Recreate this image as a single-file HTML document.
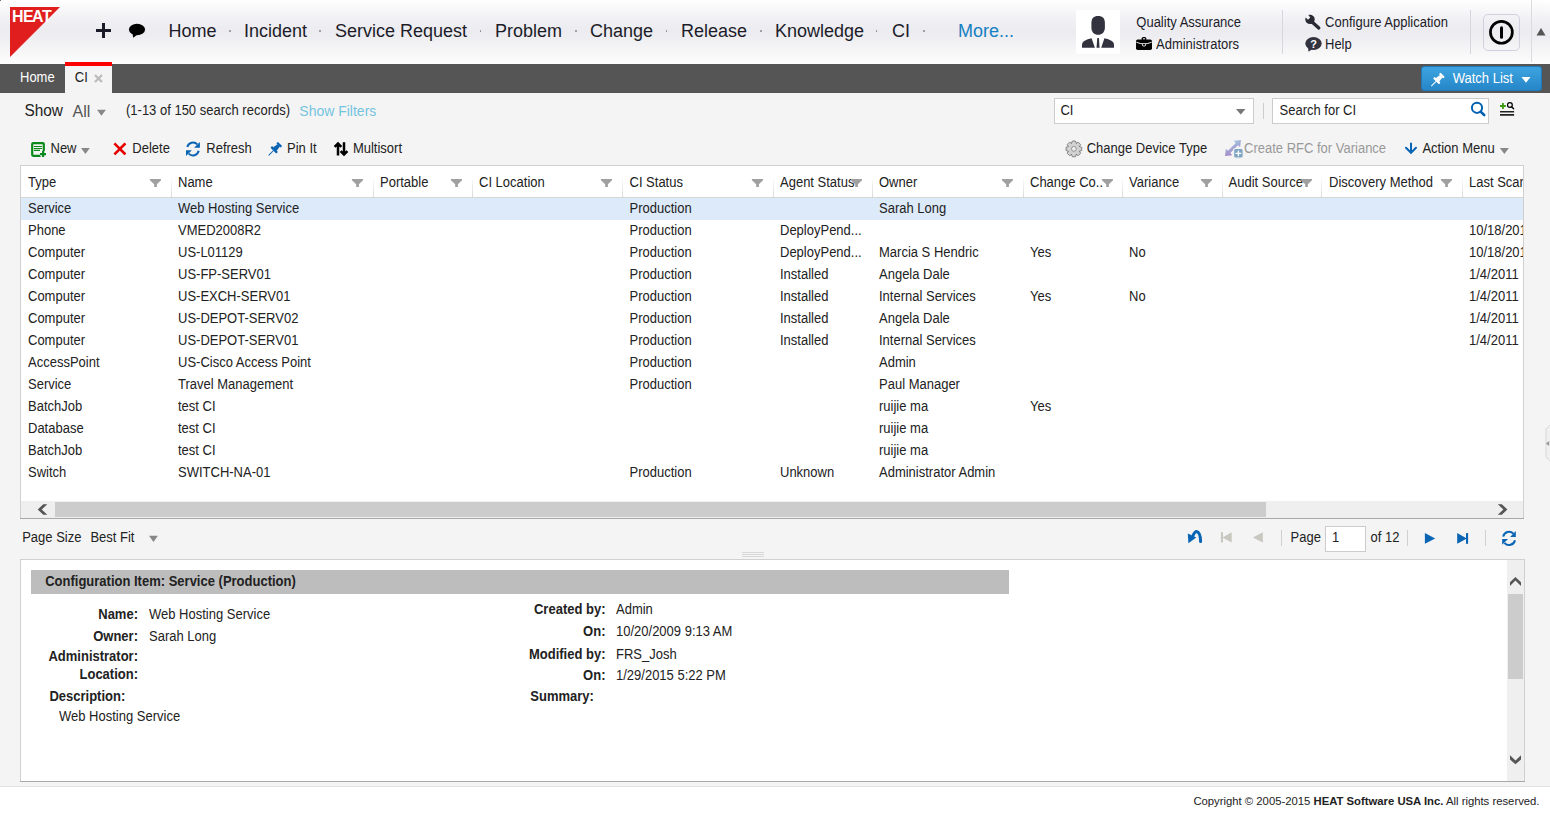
<!DOCTYPE html><html><head><meta charset="utf-8"><style>
html,body{margin:0;padding:0;width:1550px;height:816px;overflow:hidden;background:#f4f4f4;font-family:"Liberation Sans", sans-serif;}
.t{position:absolute;white-space:nowrap;}
.r{position:absolute;display:block;}

</style></head><body>
<div class="r" style="left:0px;top:0px;width:1550px;height:64px;background:linear-gradient(#ffffff 0px,#f3f3f6 16px,#ebebf0 31px,#f3f3f5 46px,#fbfbfb 60px,#fdfdfd 64px)"></div>
<svg class="r" style="left:10px;top:7px" width="50" height="50" viewBox="0 0 50 50"><polygon points="0,0 50,0 0,50" fill="#e01e1e"/></svg>
<div class="t " style="left:11.6px;top:8.88px;font-size:16.8px;line-height:16.8px;color:#fff;font-weight:bold;transform:scaleX(0.95);transform-origin:left;">H</div>
<div class="t " style="left:22.9px;top:8.88px;font-size:16.8px;line-height:16.8px;color:#fff;font-weight:bold;transform:scaleX(0.95);transform-origin:left;">E</div>
<div class="t " style="left:31.799999999999997px;top:8.88px;font-size:16.8px;line-height:16.8px;color:#fff;font-weight:bold;transform:scaleX(0.95);transform-origin:left;">A</div>
<div class="t " style="left:41.9px;top:8.88px;font-size:16.8px;line-height:16.8px;color:#fff;font-weight:bold;transform:scaleX(0.95);transform-origin:left;">T</div>
<div class="r" style="left:96px;top:29.2px;width:15px;height:2.5px;background:#1a1a28"></div>
<div class="r" style="left:102px;top:23px;width:2.9px;height:14.7px;background:#1a1a28"></div>
<svg class="r" style="left:125px;top:20px" width="25" height="22" viewBox="125 20 25 22"><ellipse cx="137" cy="29.5" rx="8.05" ry="5.75" fill="#000"/><polygon points="132.5,33.5 137.5,34.6 133.2,37.8" fill="#000"/></svg>
<div class="t " style="left:168.5px;top:21.76px;font-size:18px;line-height:18px;color:#1c1c28;font-weight:normal;">Home</div>
<div class="t " style="left:244px;top:21.76px;font-size:18px;line-height:18px;color:#1c1c28;font-weight:normal;">Incident</div>
<div class="t " style="left:335px;top:21.76px;font-size:18px;line-height:18px;color:#1c1c28;font-weight:normal;">Service Request</div>
<div class="t " style="left:495px;top:21.76px;font-size:18px;line-height:18px;color:#1c1c28;font-weight:normal;">Problem</div>
<div class="t " style="left:590px;top:21.76px;font-size:18px;line-height:18px;color:#1c1c28;font-weight:normal;">Change</div>
<div class="t " style="left:681px;top:21.76px;font-size:18px;line-height:18px;color:#1c1c28;font-weight:normal;">Release</div>
<div class="t " style="left:775px;top:21.76px;font-size:18px;line-height:18px;color:#1c1c28;font-weight:normal;">Knowledge</div>
<div class="t " style="left:892px;top:21.76px;font-size:18px;line-height:18px;color:#1c1c28;font-weight:normal;">CI</div>
<div class="r" style="left:229.05px;top:30.2px;width:1.5px;height:1.5px;background:#888;border-radius:1px"></div>
<div class="r" style="left:319.25px;top:30.2px;width:1.5px;height:1.5px;background:#888;border-radius:1px"></div>
<div class="r" style="left:479.75px;top:30.2px;width:1.5px;height:1.5px;background:#888;border-radius:1px"></div>
<div class="r" style="left:575.25px;top:30.2px;width:1.5px;height:1.5px;background:#888;border-radius:1px"></div>
<div class="r" style="left:665.75px;top:30.2px;width:1.5px;height:1.5px;background:#888;border-radius:1px"></div>
<div class="r" style="left:760.25px;top:30.2px;width:1.5px;height:1.5px;background:#888;border-radius:1px"></div>
<div class="r" style="left:875.75px;top:30.2px;width:1.5px;height:1.5px;background:#888;border-radius:1px"></div>
<div class="r" style="left:923.25px;top:30.2px;width:1.5px;height:1.5px;background:#888;border-radius:1px"></div>
<div class="t " style="left:958px;top:22.06px;font-size:18px;line-height:18px;color:#1580c2;font-weight:normal;">More...</div>
<div class="r" style="left:1076px;top:10px;width:44px;height:44px;background:#fff"></div>
<svg class="r" style="left:1076px;top:10px" width="44" height="44" viewBox="1076 10 44 44"><path d="M1098.1 15.9 C1102.6 15.9 1104.9 18.3 1104.9 23 V27.5 C1104.9 32.2 1102 34.8 1098.1 34.8 C1094.2 34.8 1091.4 32.2 1091.4 27.5 V23 C1091.4 18.3 1093.6 15.9 1098.1 15.9 Z" fill="#333340"/><path d="M1082 47.7 V44.8 C1082 41.5 1086 39.5 1091.6 38.3 L1094.9 47.7 Z" fill="#333340"/><path d="M1114 47.7 V44.8 C1114 41.5 1110 39.5 1104.4 38.3 L1101.2 47.7 Z" fill="#333340"/><polygon points="1097.3,38 1098.9,38 1099.6,47.7 1096.5,47.7" fill="#333340"/></svg>
<div class="t " style="left:1136.3px;top:16.30px;font-size:13px;line-height:13px;color:#1c1c28;font-weight:normal;transform:scaleY(1.07);transform-origin:0 11.00px;">Quality Assurance</div>
<svg class="r" style="left:1136px;top:37px" width="16" height="13" viewBox="0 0 16 13"><rect x="0" y="2.4" width="16" height="10.6" rx="1.8" fill="#000"/><rect x="6.2" y="0.7" width="3.6" height="2.6" rx="1.2" fill="none" stroke="#000" stroke-width="1.3"/><path d="M0.3 5.2 Q8 8.6 15.7 5.2" stroke="#fff" stroke-width="0.9" fill="none"/><rect x="6.4" y="6.6" width="3.2" height="2.4" rx="1" fill="#000" stroke="#fff" stroke-width="0.9"/></svg>
<div class="t " style="left:1156px;top:37.80px;font-size:13px;line-height:13px;color:#1c1c28;font-weight:normal;transform:scaleY(1.07);transform-origin:0 11.00px;">Administrators</div>
<div class="r" style="left:1282px;top:10px;width:1px;height:44px;background:#d6d6dc"></div>
<svg class="r" style="left:1302px;top:12px" width="22" height="20" viewBox="1302 12 22 20"><polygon points="1308.32,15.01 1309.57,14.72 1310.85,14.78 1312.07,15.18 1313.13,15.90 1313.96,16.87 1314.50,18.04 1314.70,19.31 1314.55,20.58 1314.06,21.77 1313.26,22.78 1312.23,23.54 1311.03,23.99 1309.75,24.09 1308.49,23.85 1307.34,23.27 1306.39,22.41 1305.71,21.32 1305.35,20.09 1305.34,18.80 1305.67,17.56 1308.02,19.68 1310.28,17.42" fill="#2a2a35"/><path d="M1311 21 L1318.8 28" stroke="#2a2a35" stroke-width="3.3" stroke-linecap="round"/></svg>
<div class="t " style="left:1325.1px;top:16.10px;font-size:13px;line-height:13px;color:#1c1c28;font-weight:normal;transform:scaleY(1.07);transform-origin:0 11.00px;">Configure Application</div>
<svg class="r" style="left:1304.5px;top:37px" width="17" height="15" viewBox="0 0 17 15"><ellipse cx="8.5" cy="6.5" rx="8.2" ry="6.4" fill="#333340"/><polygon points="3,10 7.5,12 3.5,14.8" fill="#333340"/><text x="8.5" y="10.6" font-family="Liberation Sans" font-weight="bold" font-size="11" fill="#fff" text-anchor="middle">?</text></svg>
<div class="t " style="left:1325px;top:38.00px;font-size:13px;line-height:13px;color:#1c1c28;font-weight:normal;transform:scaleY(1.07);transform-origin:0 11.00px;">Help</div>
<div class="r" style="left:1470px;top:10px;width:1px;height:44px;background:#d6d6dc"></div>
<div class="r" style="left:1483px;top:14px;width:37px;height:37px;box-sizing:border-box;border:1px solid #d0d0e0;border-radius:5px;background:transparent"></div>
<svg class="r" style="left:1483px;top:14px" width="36" height="36" viewBox="0 0 36 36"><circle cx="18.4" cy="18.3" r="10.95" fill="none" stroke="#000" stroke-width="2.7"/><rect x="17" y="12.2" width="3" height="12.6" rx="1.5" fill="#000"/></svg>
<div class="r" style="left:1531px;top:0px;width:1px;height:62px;background:#dcdce0"></div>
<svg class="r" style="left:1536px;top:28px" width="10" height="8" viewBox="0 0 10 8"><polygon points="5,0 9.5,7.5 0.5,7.5" fill="#555"/></svg>
<div class="r" style="left:0px;top:64px;width:1550px;height:29px;background:#555555"></div>
<div class="t " style="left:20px;top:71.00px;font-size:13px;line-height:13px;color:#fff;font-weight:normal;transform:scaleY(1.07);transform-origin:0 11.00px;">Home</div>
<div class="r" style="left:65px;top:62px;width:47px;height:31px;background:#f4f4f4;border-top:4px solid #ff0000;box-sizing:border-box"></div>
<div class="t " style="left:74.8px;top:71.00px;font-size:13px;line-height:13px;color:#222;font-weight:normal;transform:scaleY(1.07);transform-origin:0 11.00px;">CI</div>
<svg class="r" style="left:94px;top:74.3px" width="9" height="9" viewBox="0 0 9 9"><path d="M1 1 L8 8 M8 1 L1 8" stroke="#bbb" stroke-width="2.2"/></svg>
<div class="r" style="left:1421px;top:66px;width:121px;height:25px;background:linear-gradient(#3da4e0,#2686c8);border-radius:3px;border:1px solid #1f78b8;box-sizing:border-box"></div>
<svg class="r" style="left:1426px;top:68px" width="22" height="22" viewBox="1426 68 22 22"><g transform="translate(1436.8 80.6) rotate(45)" fill="#fff"><rect x="-3.1" y="-8.3" width="6.2" height="2.3" rx="0.9"/><polygon points="-1.7,-6.3 1.7,-6.3 2.5,-0.8 -2.5,-0.8"/><rect x="-4.2" y="-1.2" width="8.4" height="2.4" rx="0.9"/><rect x="-0.5" y="1" width="1" height="6.8"/></g></svg>
<div class="t " style="left:1452.7px;top:72.30px;font-size:13px;line-height:13px;color:#fff;font-weight:normal;transform:scaleY(1.07);transform-origin:0 11.00px;">Watch List</div>
<svg class="r" style="left:1519px;top:74px" width="14" height="11" viewBox="1519 74 14 11"><polygon points="1521.5,77 1530.5,77 1526,82.8" fill="#fff"/></svg>
<div class="t " style="left:24.4px;top:102.86px;font-size:15.4px;line-height:15.4px;color:#222;font-weight:normal;transform:scaleY(1.1);transform-origin:0 13.04px;">Show</div>
<div class="t " style="left:72.5px;top:103.66px;font-size:16px;line-height:16px;color:#555;font-weight:normal;">All</div>
<svg class="r" style="left:95px;top:107px" width="13" height="11" viewBox="95 107 13 11"><polygon points="97,109.8 105.9,109.8 101.45,115.7" fill="#888"/></svg>
<div class="t " style="left:126px;top:104.00px;font-size:13px;line-height:13px;color:#222;font-weight:normal;transform:scaleY(1.07);transform-origin:0 11.00px;">(1-13 of 150 search records)</div>
<div class="t " style="left:299.3px;top:104.15px;font-size:14px;line-height:14px;color:#74c4e0;font-weight:normal;">Show Filters</div>
<div class="r" style="left:1054px;top:98px;width:200px;height:26px;background:#fff;border:1px solid #ccc;box-sizing:border-box"></div>
<div class="t " style="left:1060.4px;top:104.00px;font-size:13px;line-height:13px;color:#222;font-weight:normal;transform:scaleY(1.07);transform-origin:0 11.00px;">CI</div>
<svg class="r" style="left:1236px;top:109px" width="10" height="6" viewBox="0 0 10 6"><polygon points="0,0 9.5,0 4.75,5.5" fill="#777"/></svg>
<div class="r" style="left:1262.5px;top:103px;width:1px;height:16px;background:#ccc"></div>
<div class="r" style="left:1272px;top:98px;width:217px;height:26px;background:#fff;border:1px solid #ccc;box-sizing:border-box"></div>
<div class="t " style="left:1279.5px;top:104.00px;font-size:13px;line-height:13px;color:#222;font-weight:normal;transform:scaleY(1.07);transform-origin:0 11.00px;">Search for CI</div>
<svg class="r" style="left:1465px;top:98px" width="25" height="24" viewBox="1465 98 25 24"><circle cx="1477" cy="107.8" r="5.1" fill="none" stroke="#0060b0" stroke-width="2"/><path d="M1480.6 111.6 L1484.2 115" stroke="#0060b0" stroke-width="2.6" stroke-linecap="round"/></svg>
<svg class="r" style="left:1495px;top:98px" width="25" height="22" viewBox="1495 98 25 22"><path d="M1500 106 H1505.8 M1502.9 103.1 V108.9" stroke="#3a9a10" stroke-width="1.8"/><circle cx="1509.9" cy="105" r="2.4" fill="none" stroke="#000" stroke-width="1.2"/><path d="M1511.6 106.8 L1513.6 108.8" stroke="#000" stroke-width="1.4" stroke-linecap="round"/><path d="M1500 111.8 H1514.1 M1500 114.9 H1514.1" stroke="#222" stroke-width="1.6"/></svg>
<svg class="r" style="left:28px;top:139px" width="22" height="21" viewBox="28 139 22 21"><rect x="32.2" y="143.1" width="11.6" height="12.7" rx="1" fill="none" stroke="#0a8a1a" stroke-width="2.2"/><path d="M34 146.5 H41.9 M34 148.5 H41.9 M34 150.4 H40" stroke="#0a8a1a" stroke-width="1.1"/><path d="M40 154.1 H46 M43.1 151 V157" stroke="#f4f4f4" stroke-width="4.4"/><path d="M40 154.1 H46 M43.1 151 V157" stroke="#0a8a1a" stroke-width="2.2"/></svg>
<div class="t " style="left:50.5px;top:142.00px;font-size:13px;line-height:13px;color:#222;font-weight:normal;transform:scaleY(1.07);transform-origin:0 11.00px;">New</div>
<svg class="r" style="left:78px;top:145px" width="15" height="12" viewBox="78 145 15 12"><polygon points="81,148 89.8,148 85.4,153.9" fill="#888"/></svg>
<svg class="r" style="left:110px;top:140px" width="20" height="18" viewBox="110 140 20 18"><path d="M115.3 144.3 L124.5 153.5 M124.5 144.3 L115.3 153.5" stroke="#e60000" stroke-width="2.6" stroke-linecap="square"/></svg>
<div class="t " style="left:132.3px;top:142.00px;font-size:13px;line-height:13px;color:#222;font-weight:normal;transform:scaleY(1.07);transform-origin:0 11.00px;">Delete</div>
<svg class="r" style="left:183px;top:139px" width="20" height="20" viewBox="183 139 20 20"><path d="M187.3 147 A5.9 5.9 0 0 1 197.3 144.4" fill="none" stroke="#0a64b4" stroke-width="2"/><polygon points="199.9,142 199.9,147.8 194.1,147.8" fill="#0a64b4"/><path d="M198.7 150.8 A5.9 5.9 0 0 1 188.7 153.6" fill="none" stroke="#0a64b4" stroke-width="2"/><polygon points="186,150.2 191.9,150.2 186,156" fill="#0a64b4"/></svg>
<div class="t " style="left:206.3px;top:142.00px;font-size:13px;line-height:13px;color:#222;font-weight:normal;transform:scaleY(1.07);transform-origin:0 11.00px;">Refresh</div>
<svg class="r" style="left:264px;top:139px" width="22" height="20" viewBox="264 139 22 20"><g transform="translate(274.2 149.8) rotate(45)" fill="#0a64b4"><rect x="-3.1" y="-8.3" width="6.2" height="2.3" rx="0.9"/><polygon points="-1.7,-6.3 1.7,-6.3 2.5,-0.8 -2.5,-0.8"/><rect x="-4.2" y="-1.2" width="8.4" height="2.4" rx="0.9"/><rect x="-0.5" y="1" width="1" height="6.8"/></g></svg>
<div class="t " style="left:287px;top:142.00px;font-size:13px;line-height:13px;color:#222;font-weight:normal;transform:scaleY(1.07);transform-origin:0 11.00px;">Pin It</div>
<svg class="r" style="left:330px;top:139px" width="20" height="20" viewBox="330 139 20 20"><path d="M338 143.5 V155.5 M334.6 146.9 L338 143.5 L341.4 146.9" fill="none" stroke="#000" stroke-width="2.5"/><path d="M344 142.2 V154.5 M340.6 151.1 L344 154.5 L347.4 151.1" fill="none" stroke="#000" stroke-width="2.5"/></svg>
<div class="t " style="left:352.9px;top:142.00px;font-size:13px;line-height:13px;color:#222;font-weight:normal;transform:scaleY(1.07);transform-origin:0 11.00px;">Multisort</div>
<svg class="r" style="left:1062px;top:137px" width="24" height="24" viewBox="1062 137 24 24"><polygon points="1071.49,143.51 1072.31,141.06 1075.49,141.06 1076.31,143.51 1076.01,143.39 1078.32,142.23 1080.57,144.48 1079.41,146.79 1079.29,146.49 1081.74,147.31 1081.74,150.49 1079.29,151.31 1079.41,151.01 1080.57,153.32 1078.32,155.57 1076.01,154.41 1076.31,154.29 1075.49,156.74 1072.31,156.74 1071.49,154.29 1071.79,154.41 1069.48,155.57 1067.23,153.32 1068.39,151.01 1068.51,151.31 1066.06,150.49 1066.06,147.31 1068.51,146.49 1068.39,146.79 1067.23,144.48 1069.48,142.23 1071.79,143.39" fill="#d2d2d2" stroke="#7a7a7a" stroke-width="0.9" stroke-linejoin="round"/><circle cx="1073.9" cy="148.9" r="2.4" fill="#f0f0f0" stroke="#8a8a8a" stroke-width="0.9"/></svg>
<div class="t " style="left:1086.7px;top:142.00px;font-size:13px;line-height:13px;color:#222;font-weight:normal;transform:scaleY(1.07);transform-origin:0 11.00px;">Change Device Type</div>
<svg class="r" style="left:1220px;top:136px" width="26" height="24" viewBox="1220 136 26 24"><defs><linearGradient id="rg" x1="0" y1="1" x2="1" y2="0"><stop offset="0" stop-color="#a27ac4"/><stop offset="1" stop-color="#a6d2e4"/></linearGradient></defs><g transform="translate(1233 148) rotate(-45)"><polygon points="-11.3,0 -5.5,-4.6 -5.5,-1.6 5.5,-1.6 5.5,-4.6 11.3,0 5.5,4.6 5.5,1.6 -5.5,1.6 -5.5,4.6" fill="url(#rg)"/></g><rect x="1233.6" y="148.5" width="9.6" height="9.7" rx="2" fill="#7ea4c4" stroke="#f4f4f4" stroke-width="1.2"/><path d="M1238.4 150.4 V156.3 M1235.5 153.35 H1241.3" stroke="#fff" stroke-width="1.3"/></svg>
<div class="t " style="left:1244px;top:142.00px;font-size:13px;line-height:13px;color:#999;font-weight:normal;transform:scaleY(1.07);transform-origin:0 11.00px;">Create RFC for Variance</div>
<svg class="r" style="left:1402px;top:140px" width="18" height="17" viewBox="1402 140 18 17"><path d="M1411 143.5 V152.5 M1406 147.8 L1411 152.8 L1416 147.8" fill="none" stroke="#0a64b4" stroke-width="2" stroke-linecap="round"/></svg>
<div class="t " style="left:1422.4px;top:142.00px;font-size:13px;line-height:13px;color:#222;font-weight:normal;transform:scaleY(1.07);transform-origin:0 11.00px;">Action Menu</div>
<svg class="r" style="left:1497px;top:145px" width="15" height="12" viewBox="1497 145 15 12"><polygon points="1499.8,148.1 1508.9,148.1 1504.4,154" fill="#888"/></svg>
<div class="r" style="left:20px;top:165px;width:1504px;height:354px;background:#fff;border:1px solid #d0d0d0;box-sizing:border-box"></div>
<div class="r" style="left:21px;top:197px;width:1502px;height:1px;background:#d6d6d6"></div>
<div class="r" style="left:171px;top:177px;width:1px;height:20px;background:linear-gradient(rgba(220,220,220,0),#d8d8d8)"></div>
<div class="r" style="left:373px;top:177px;width:1px;height:20px;background:linear-gradient(rgba(220,220,220,0),#d8d8d8)"></div>
<div class="r" style="left:472px;top:177px;width:1px;height:20px;background:linear-gradient(rgba(220,220,220,0),#d8d8d8)"></div>
<div class="r" style="left:622px;top:177px;width:1px;height:20px;background:linear-gradient(rgba(220,220,220,0),#d8d8d8)"></div>
<div class="r" style="left:773px;top:177px;width:1px;height:20px;background:linear-gradient(rgba(220,220,220,0),#d8d8d8)"></div>
<div class="r" style="left:872px;top:177px;width:1px;height:20px;background:linear-gradient(rgba(220,220,220,0),#d8d8d8)"></div>
<div class="r" style="left:1023px;top:177px;width:1px;height:20px;background:linear-gradient(rgba(220,220,220,0),#d8d8d8)"></div>
<div class="r" style="left:1122px;top:177px;width:1px;height:20px;background:linear-gradient(rgba(220,220,220,0),#d8d8d8)"></div>
<div class="r" style="left:1222px;top:177px;width:1px;height:20px;background:linear-gradient(rgba(220,220,220,0),#d8d8d8)"></div>
<div class="r" style="left:1321px;top:177px;width:1px;height:20px;background:linear-gradient(rgba(220,220,220,0),#d8d8d8)"></div>
<div class="r" style="left:1462px;top:177px;width:1px;height:20px;background:linear-gradient(rgba(220,220,220,0),#d8d8d8)"></div>
<div class="r" style="left:21px;top:166px;width:1502px;height:335px;overflow:hidden">
<div class="t " style="left:7px;top:10.00px;font-size:13px;line-height:13px;color:#222;font-weight:normal;transform:scaleY(1.07);transform-origin:0 11.00px;">Type</div>
<div class="t " style="left:157px;top:10.00px;font-size:13px;line-height:13px;color:#222;font-weight:normal;transform:scaleY(1.07);transform-origin:0 11.00px;">Name</div>
<div class="t " style="left:359px;top:10.00px;font-size:13px;line-height:13px;color:#222;font-weight:normal;transform:scaleY(1.07);transform-origin:0 11.00px;">Portable</div>
<div class="t " style="left:458px;top:10.00px;font-size:13px;line-height:13px;color:#222;font-weight:normal;transform:scaleY(1.07);transform-origin:0 11.00px;">CI Location</div>
<div class="t " style="left:608.5px;top:10.00px;font-size:13px;line-height:13px;color:#222;font-weight:normal;transform:scaleY(1.07);transform-origin:0 11.00px;">CI Status</div>
<div class="t " style="left:759px;top:10.00px;font-size:13px;line-height:13px;color:#222;font-weight:normal;transform:scaleY(1.07);transform-origin:0 11.00px;">Agent Status</div>
<div class="t " style="left:858px;top:10.00px;font-size:13px;line-height:13px;color:#222;font-weight:normal;transform:scaleY(1.07);transform-origin:0 11.00px;">Owner</div>
<div class="t " style="left:1009px;top:10.00px;font-size:13px;line-height:13px;color:#222;font-weight:normal;transform:scaleY(1.07);transform-origin:0 11.00px;">Change Co..</div>
<div class="t " style="left:1108px;top:10.00px;font-size:13px;line-height:13px;color:#222;font-weight:normal;transform:scaleY(1.07);transform-origin:0 11.00px;">Variance</div>
<div class="t " style="left:1207.5px;top:10.00px;font-size:13px;line-height:13px;color:#222;font-weight:normal;transform:scaleY(1.07);transform-origin:0 11.00px;">Audit Source</div>
<div class="t " style="left:1308px;top:10.00px;font-size:13px;line-height:13px;color:#222;font-weight:normal;transform:scaleY(1.07);transform-origin:0 11.00px;">Discovery Method</div>
<div class="t " style="left:1448px;top:10.00px;font-size:13px;line-height:13px;color:#222;font-weight:normal;transform:scaleY(1.07);transform-origin:0 11.00px;">Last Scan</div>
<svg class="r" style="left:128.0px;top:12px" width="13.0" height="10" viewBox="128.0 12 13.0 10"><polygon points="128.9,13 140.0,13 140.0,14.199999999999989 135.9,18.19999999999999 135.9,20.900000000000006 133.2,20.900000000000006 133.2,18.19999999999999 128.9,14.199999999999989" fill="#a0a0a0"/></svg>
<svg class="r" style="left:330.0px;top:12px" width="13.0" height="10" viewBox="330.0 12 13.0 10"><polygon points="330.9,13 342.0,13 342.0,14.199999999999989 337.9,18.19999999999999 337.9,20.900000000000006 335.2,20.900000000000006 335.2,18.19999999999999 330.9,14.199999999999989" fill="#a0a0a0"/></svg>
<svg class="r" style="left:428.5px;top:12px" width="13.0" height="10" viewBox="428.5 12 13.0 10"><polygon points="429.4,13 440.5,13 440.5,14.199999999999989 436.4,18.19999999999999 436.4,20.900000000000006 433.7,20.900000000000006 433.7,18.19999999999999 429.4,14.199999999999989" fill="#a0a0a0"/></svg>
<svg class="r" style="left:578.5px;top:12px" width="13.0" height="10" viewBox="578.5 12 13.0 10"><polygon points="579.4,13 590.5,13 590.5,14.199999999999989 586.4,18.19999999999999 586.4,20.900000000000006 583.7,20.900000000000006 583.7,18.19999999999999 579.4,14.199999999999989" fill="#a0a0a0"/></svg>
<svg class="r" style="left:729.5px;top:12px" width="13.0" height="10" viewBox="729.5 12 13.0 10"><polygon points="730.4,13 741.5,13 741.5,14.199999999999989 737.4,18.19999999999999 737.4,20.900000000000006 734.7,20.900000000000006 734.7,18.19999999999999 730.4,14.199999999999989" fill="#a0a0a0"/></svg>
<svg class="r" style="left:829.0px;top:12px" width="13.0" height="10" viewBox="829.0 12 13.0 10"><polygon points="829.9,13 841.0,13 841.0,14.199999999999989 836.9,18.19999999999999 836.9,20.900000000000006 834.2,20.900000000000006 834.2,18.19999999999999 829.9,14.199999999999989" fill="#a0a0a0"/></svg>
<svg class="r" style="left:980.0px;top:12px" width="13.0" height="10" viewBox="980.0 12 13.0 10"><polygon points="980.9,13 992.0,13 992.0,14.199999999999989 987.9,18.19999999999999 987.9,20.900000000000006 985.2,20.900000000000006 985.2,18.19999999999999 980.9,14.199999999999989" fill="#a0a0a0"/></svg>
<svg class="r" style="left:1079.5px;top:12px" width="13.0" height="10" viewBox="1079.5 12 13.0 10"><polygon points="1080.4,13 1091.5,13 1091.5,14.199999999999989 1087.4,18.19999999999999 1087.4,20.900000000000006 1084.7,20.900000000000006 1084.7,18.19999999999999 1080.4,14.199999999999989" fill="#a0a0a0"/></svg>
<svg class="r" style="left:1179.0px;top:12px" width="13.0" height="10" viewBox="1179.0 12 13.0 10"><polygon points="1179.9,13 1191.0,13 1191.0,14.199999999999989 1186.9,18.19999999999999 1186.9,20.900000000000006 1184.2,20.900000000000006 1184.2,18.19999999999999 1179.9,14.199999999999989" fill="#a0a0a0"/></svg>
<svg class="r" style="left:1278.5px;top:12px" width="13.0" height="10" viewBox="1278.5 12 13.0 10"><polygon points="1279.4,13 1290.5,13 1290.5,14.199999999999989 1286.4,18.19999999999999 1286.4,20.900000000000006 1283.7,20.900000000000006 1283.7,18.19999999999999 1279.4,14.199999999999989" fill="#a0a0a0"/></svg>
<svg class="r" style="left:1418.9px;top:12px" width="13.0" height="10" viewBox="1418.9 12 13.0 10"><polygon points="1419.8000000000002,13 1430.9,13 1430.9,14.199999999999989 1426.8000000000002,18.19999999999999 1426.8000000000002,20.900000000000006 1424.1000000000001,20.900000000000006 1424.1000000000001,18.19999999999999 1419.8000000000002,14.199999999999989" fill="#a0a0a0"/></svg>
<div class="r" style="left:0px;top:32px;width:1502px;height:22px;background:#ddeafa"></div>
<div class="t " style="left:7px;top:36.20px;font-size:13px;line-height:13px;color:#222;font-weight:normal;transform:scaleY(1.07);transform-origin:0 11.00px;">Service</div>
<div class="t " style="left:157px;top:36.20px;font-size:13px;line-height:13px;color:#222;font-weight:normal;transform:scaleY(1.07);transform-origin:0 11.00px;">Web Hosting Service</div>
<div class="t " style="left:608.5px;top:36.20px;font-size:13px;line-height:13px;color:#222;font-weight:normal;transform:scaleY(1.07);transform-origin:0 11.00px;">Production</div>
<div class="t " style="left:858px;top:36.20px;font-size:13px;line-height:13px;color:#222;font-weight:normal;transform:scaleY(1.07);transform-origin:0 11.00px;">Sarah Long</div>
<div class="t " style="left:7px;top:58.20px;font-size:13px;line-height:13px;color:#222;font-weight:normal;transform:scaleY(1.07);transform-origin:0 11.00px;">Phone</div>
<div class="t " style="left:157px;top:58.20px;font-size:13px;line-height:13px;color:#222;font-weight:normal;transform:scaleY(1.07);transform-origin:0 11.00px;">VMED2008R2</div>
<div class="t " style="left:608.5px;top:58.20px;font-size:13px;line-height:13px;color:#222;font-weight:normal;transform:scaleY(1.07);transform-origin:0 11.00px;">Production</div>
<div class="t " style="left:759px;top:58.20px;font-size:13px;line-height:13px;color:#222;font-weight:normal;transform:scaleY(1.07);transform-origin:0 11.00px;">DeployPend...</div>
<div class="t " style="left:1448px;top:58.20px;font-size:13px;line-height:13px;color:#222;font-weight:normal;transform:scaleY(1.07);transform-origin:0 11.00px;">10/18/2011</div>
<div class="t " style="left:7px;top:80.20px;font-size:13px;line-height:13px;color:#222;font-weight:normal;transform:scaleY(1.07);transform-origin:0 11.00px;">Computer</div>
<div class="t " style="left:157px;top:80.20px;font-size:13px;line-height:13px;color:#222;font-weight:normal;transform:scaleY(1.07);transform-origin:0 11.00px;">US-L01129</div>
<div class="t " style="left:608.5px;top:80.20px;font-size:13px;line-height:13px;color:#222;font-weight:normal;transform:scaleY(1.07);transform-origin:0 11.00px;">Production</div>
<div class="t " style="left:759px;top:80.20px;font-size:13px;line-height:13px;color:#222;font-weight:normal;transform:scaleY(1.07);transform-origin:0 11.00px;">DeployPend...</div>
<div class="t " style="left:858px;top:80.20px;font-size:13px;line-height:13px;color:#222;font-weight:normal;transform:scaleY(1.07);transform-origin:0 11.00px;">Marcia S Hendric</div>
<div class="t " style="left:1009px;top:80.20px;font-size:13px;line-height:13px;color:#222;font-weight:normal;transform:scaleY(1.07);transform-origin:0 11.00px;">Yes</div>
<div class="t " style="left:1108px;top:80.20px;font-size:13px;line-height:13px;color:#222;font-weight:normal;transform:scaleY(1.07);transform-origin:0 11.00px;">No</div>
<div class="t " style="left:1448px;top:80.20px;font-size:13px;line-height:13px;color:#222;font-weight:normal;transform:scaleY(1.07);transform-origin:0 11.00px;">10/18/2011</div>
<div class="t " style="left:7px;top:102.20px;font-size:13px;line-height:13px;color:#222;font-weight:normal;transform:scaleY(1.07);transform-origin:0 11.00px;">Computer</div>
<div class="t " style="left:157px;top:102.20px;font-size:13px;line-height:13px;color:#222;font-weight:normal;transform:scaleY(1.07);transform-origin:0 11.00px;">US-FP-SERV01</div>
<div class="t " style="left:608.5px;top:102.20px;font-size:13px;line-height:13px;color:#222;font-weight:normal;transform:scaleY(1.07);transform-origin:0 11.00px;">Production</div>
<div class="t " style="left:759px;top:102.20px;font-size:13px;line-height:13px;color:#222;font-weight:normal;transform:scaleY(1.07);transform-origin:0 11.00px;">Installed</div>
<div class="t " style="left:858px;top:102.20px;font-size:13px;line-height:13px;color:#222;font-weight:normal;transform:scaleY(1.07);transform-origin:0 11.00px;">Angela Dale</div>
<div class="t " style="left:1448px;top:102.20px;font-size:13px;line-height:13px;color:#222;font-weight:normal;transform:scaleY(1.07);transform-origin:0 11.00px;">1/4/2011</div>
<div class="t " style="left:7px;top:124.20px;font-size:13px;line-height:13px;color:#222;font-weight:normal;transform:scaleY(1.07);transform-origin:0 11.00px;">Computer</div>
<div class="t " style="left:157px;top:124.20px;font-size:13px;line-height:13px;color:#222;font-weight:normal;transform:scaleY(1.07);transform-origin:0 11.00px;">US-EXCH-SERV01</div>
<div class="t " style="left:608.5px;top:124.20px;font-size:13px;line-height:13px;color:#222;font-weight:normal;transform:scaleY(1.07);transform-origin:0 11.00px;">Production</div>
<div class="t " style="left:759px;top:124.20px;font-size:13px;line-height:13px;color:#222;font-weight:normal;transform:scaleY(1.07);transform-origin:0 11.00px;">Installed</div>
<div class="t " style="left:858px;top:124.20px;font-size:13px;line-height:13px;color:#222;font-weight:normal;transform:scaleY(1.07);transform-origin:0 11.00px;">Internal Services</div>
<div class="t " style="left:1009px;top:124.20px;font-size:13px;line-height:13px;color:#222;font-weight:normal;transform:scaleY(1.07);transform-origin:0 11.00px;">Yes</div>
<div class="t " style="left:1108px;top:124.20px;font-size:13px;line-height:13px;color:#222;font-weight:normal;transform:scaleY(1.07);transform-origin:0 11.00px;">No</div>
<div class="t " style="left:1448px;top:124.20px;font-size:13px;line-height:13px;color:#222;font-weight:normal;transform:scaleY(1.07);transform-origin:0 11.00px;">1/4/2011</div>
<div class="t " style="left:7px;top:146.20px;font-size:13px;line-height:13px;color:#222;font-weight:normal;transform:scaleY(1.07);transform-origin:0 11.00px;">Computer</div>
<div class="t " style="left:157px;top:146.20px;font-size:13px;line-height:13px;color:#222;font-weight:normal;transform:scaleY(1.07);transform-origin:0 11.00px;">US-DEPOT-SERV02</div>
<div class="t " style="left:608.5px;top:146.20px;font-size:13px;line-height:13px;color:#222;font-weight:normal;transform:scaleY(1.07);transform-origin:0 11.00px;">Production</div>
<div class="t " style="left:759px;top:146.20px;font-size:13px;line-height:13px;color:#222;font-weight:normal;transform:scaleY(1.07);transform-origin:0 11.00px;">Installed</div>
<div class="t " style="left:858px;top:146.20px;font-size:13px;line-height:13px;color:#222;font-weight:normal;transform:scaleY(1.07);transform-origin:0 11.00px;">Angela Dale</div>
<div class="t " style="left:1448px;top:146.20px;font-size:13px;line-height:13px;color:#222;font-weight:normal;transform:scaleY(1.07);transform-origin:0 11.00px;">1/4/2011</div>
<div class="t " style="left:7px;top:168.20px;font-size:13px;line-height:13px;color:#222;font-weight:normal;transform:scaleY(1.07);transform-origin:0 11.00px;">Computer</div>
<div class="t " style="left:157px;top:168.20px;font-size:13px;line-height:13px;color:#222;font-weight:normal;transform:scaleY(1.07);transform-origin:0 11.00px;">US-DEPOT-SERV01</div>
<div class="t " style="left:608.5px;top:168.20px;font-size:13px;line-height:13px;color:#222;font-weight:normal;transform:scaleY(1.07);transform-origin:0 11.00px;">Production</div>
<div class="t " style="left:759px;top:168.20px;font-size:13px;line-height:13px;color:#222;font-weight:normal;transform:scaleY(1.07);transform-origin:0 11.00px;">Installed</div>
<div class="t " style="left:858px;top:168.20px;font-size:13px;line-height:13px;color:#222;font-weight:normal;transform:scaleY(1.07);transform-origin:0 11.00px;">Internal Services</div>
<div class="t " style="left:1448px;top:168.20px;font-size:13px;line-height:13px;color:#222;font-weight:normal;transform:scaleY(1.07);transform-origin:0 11.00px;">1/4/2011</div>
<div class="t " style="left:7px;top:190.20px;font-size:13px;line-height:13px;color:#222;font-weight:normal;transform:scaleY(1.07);transform-origin:0 11.00px;">AccessPoint</div>
<div class="t " style="left:157px;top:190.20px;font-size:13px;line-height:13px;color:#222;font-weight:normal;transform:scaleY(1.07);transform-origin:0 11.00px;">US-Cisco Access Point</div>
<div class="t " style="left:608.5px;top:190.20px;font-size:13px;line-height:13px;color:#222;font-weight:normal;transform:scaleY(1.07);transform-origin:0 11.00px;">Production</div>
<div class="t " style="left:858px;top:190.20px;font-size:13px;line-height:13px;color:#222;font-weight:normal;transform:scaleY(1.07);transform-origin:0 11.00px;">Admin</div>
<div class="t " style="left:7px;top:212.20px;font-size:13px;line-height:13px;color:#222;font-weight:normal;transform:scaleY(1.07);transform-origin:0 11.00px;">Service</div>
<div class="t " style="left:157px;top:212.20px;font-size:13px;line-height:13px;color:#222;font-weight:normal;transform:scaleY(1.07);transform-origin:0 11.00px;">Travel Management</div>
<div class="t " style="left:608.5px;top:212.20px;font-size:13px;line-height:13px;color:#222;font-weight:normal;transform:scaleY(1.07);transform-origin:0 11.00px;">Production</div>
<div class="t " style="left:858px;top:212.20px;font-size:13px;line-height:13px;color:#222;font-weight:normal;transform:scaleY(1.07);transform-origin:0 11.00px;">Paul Manager</div>
<div class="t " style="left:7px;top:234.20px;font-size:13px;line-height:13px;color:#222;font-weight:normal;transform:scaleY(1.07);transform-origin:0 11.00px;">BatchJob</div>
<div class="t " style="left:157px;top:234.20px;font-size:13px;line-height:13px;color:#222;font-weight:normal;transform:scaleY(1.07);transform-origin:0 11.00px;">test CI</div>
<div class="t " style="left:858px;top:234.20px;font-size:13px;line-height:13px;color:#222;font-weight:normal;transform:scaleY(1.07);transform-origin:0 11.00px;">ruijie ma</div>
<div class="t " style="left:1009px;top:234.20px;font-size:13px;line-height:13px;color:#222;font-weight:normal;transform:scaleY(1.07);transform-origin:0 11.00px;">Yes</div>
<div class="t " style="left:7px;top:256.20px;font-size:13px;line-height:13px;color:#222;font-weight:normal;transform:scaleY(1.07);transform-origin:0 11.00px;">Database</div>
<div class="t " style="left:157px;top:256.20px;font-size:13px;line-height:13px;color:#222;font-weight:normal;transform:scaleY(1.07);transform-origin:0 11.00px;">test CI</div>
<div class="t " style="left:858px;top:256.20px;font-size:13px;line-height:13px;color:#222;font-weight:normal;transform:scaleY(1.07);transform-origin:0 11.00px;">ruijie ma</div>
<div class="t " style="left:7px;top:278.20px;font-size:13px;line-height:13px;color:#222;font-weight:normal;transform:scaleY(1.07);transform-origin:0 11.00px;">BatchJob</div>
<div class="t " style="left:157px;top:278.20px;font-size:13px;line-height:13px;color:#222;font-weight:normal;transform:scaleY(1.07);transform-origin:0 11.00px;">test CI</div>
<div class="t " style="left:858px;top:278.20px;font-size:13px;line-height:13px;color:#222;font-weight:normal;transform:scaleY(1.07);transform-origin:0 11.00px;">ruijie ma</div>
<div class="t " style="left:7px;top:300.20px;font-size:13px;line-height:13px;color:#222;font-weight:normal;transform:scaleY(1.07);transform-origin:0 11.00px;">Switch</div>
<div class="t " style="left:157px;top:300.20px;font-size:13px;line-height:13px;color:#222;font-weight:normal;transform:scaleY(1.07);transform-origin:0 11.00px;">SWITCH-NA-01</div>
<div class="t " style="left:608.5px;top:300.20px;font-size:13px;line-height:13px;color:#222;font-weight:normal;transform:scaleY(1.07);transform-origin:0 11.00px;">Production</div>
<div class="t " style="left:759px;top:300.20px;font-size:13px;line-height:13px;color:#222;font-weight:normal;transform:scaleY(1.07);transform-origin:0 11.00px;">Unknown</div>
<div class="t " style="left:858px;top:300.20px;font-size:13px;line-height:13px;color:#222;font-weight:normal;transform:scaleY(1.07);transform-origin:0 11.00px;">Administrator Admin</div>
</div>
<div class="r" style="left:21px;top:501px;width:1502px;height:17px;background:#efefef"></div>
<div class="r" style="left:20px;top:518px;width:1504px;height:1px;background:#a8a8a8"></div>
<div class="r" style="left:55px;top:502px;width:1211px;height:15px;background:#cccccc"></div>
<svg class="r" style="left:34px;top:502px" width="16" height="15" viewBox="34 502 16 15"><polygon points="37.7,509.5 43.3,504.2 47.3,504.2 41.7,509.5 47.3,514.8 43.3,514.8" fill="#555"/></svg>
<svg class="r" style="left:1494px;top:502px" width="16" height="15" viewBox="1494 502 16 15"><polygon points="1507.4,509.5 1501.8,504.2 1497.8,504.2 1503.4,509.5 1497.8,514.8 1501.8,514.8" fill="#555"/></svg>
<div class="t " style="left:22.2px;top:530.50px;font-size:13px;line-height:13px;color:#222;font-weight:normal;transform:scaleY(1.07);transform-origin:0 11.00px;">Page Size</div>
<div class="t " style="left:90.4px;top:530.50px;font-size:13px;line-height:13px;color:#222;font-weight:normal;transform:scaleY(1.07);transform-origin:0 11.00px;">Best Fit</div>
<svg class="r" style="left:146px;top:533px" width="14" height="12" viewBox="146 533 14 12"><polygon points="149,535.8 157.9,535.8 153.45,542" fill="#888"/></svg>
<svg class="r" style="left:1184px;top:526px" width="22" height="22" viewBox="1184 526 22 22"><polygon points="1187.8,533.6 1188.4,543.2 1196.3,537.4" fill="#0a64b4"/><path d="M1193 535.5 Q1195 531.5 1196.5 531.6 Q1200.3 532 1200.6 541.6" fill="none" stroke="#0a64b4" stroke-width="3" stroke-linecap="round"/></svg>
<svg class="r" style="left:1218px;top:529px" width="17" height="17" viewBox="1218 529 17 17"><rect x="1220.9" y="532.2" width="2.1" height="10.3" fill="#c8c8c0"/><polygon points="1222.5,537.4 1231.7,532.2 1231.7,542.6" fill="#c8c8c0"/></svg>
<svg class="r" style="left:1250px;top:529px" width="16" height="17" viewBox="1250 529 16 17"><polygon points="1252.9,537.4 1262.8,532.2 1262.8,542.6" fill="#c8c8c0"/></svg>
<div class="r" style="left:1281px;top:530px;width:1px;height:16px;background:#d0d0d0"></div>
<div class="t " style="left:1290.6px;top:531.40px;font-size:13px;line-height:13px;color:#222;font-weight:normal;transform:scaleY(1.07);transform-origin:0 11.00px;">Page</div>
<div class="r" style="left:1325px;top:526px;width:41px;height:26px;background:#fff;border:1px solid #ccc;box-sizing:border-box"></div>
<div class="t " style="left:1332px;top:531.40px;font-size:13px;line-height:13px;color:#222;font-weight:normal;transform:scaleY(1.07);transform-origin:0 11.00px;">1</div>
<div class="t " style="left:1370.6px;top:531.40px;font-size:13px;line-height:13px;color:#222;font-weight:normal;transform:scaleY(1.07);transform-origin:0 11.00px;">of 12</div>
<div class="r" style="left:1407px;top:530px;width:1px;height:16px;background:#d0d0d0"></div>
<svg class="r" style="left:1422px;top:530px" width="16" height="17" viewBox="1422 530 16 17"><polygon points="1424.9,533.1 1424.9,543.8 1435.2,538.5" fill="#0a64b4"/></svg>
<svg class="r" style="left:1454px;top:530px" width="17" height="17" viewBox="1454 530 17 17"><polygon points="1457.2,533.1 1457.2,543.8 1466.8,538.5" fill="#0a64b4"/><rect x="1466" y="533.1" width="2.1" height="10.7" fill="#0a64b4"/></svg>
<div class="r" style="left:1485px;top:530px;width:1px;height:16px;background:#d0d0d0"></div>
<svg class="r" style="left:1499px;top:527px" width="20" height="22" viewBox="1499 527 20 22"><path d="M1503.2 536.6 A6 6 0 0 1 1513.4 533.6" fill="none" stroke="#0a64b4" stroke-width="2"/><polygon points="1515.8,531 1515.8,536.9 1510.1,536.9" fill="#0a64b4"/><path d="M1515 540.2 A6 6 0 0 1 1504.5 542.8" fill="none" stroke="#0a64b4" stroke-width="2"/><polygon points="1502.2,539 1508,539 1502.2,544.8" fill="#0a64b4"/></svg>
<div class="r" style="left:742px;top:552px;width:22px;height:1px;background:#d8d8d8"></div>
<div class="r" style="left:742px;top:554px;width:22px;height:1px;background:#d8d8d8"></div>
<div class="r" style="left:742px;top:556px;width:22px;height:1px;background:#d8d8d8"></div>
<div class="r" style="left:20px;top:559px;width:1505px;height:223px;background:#fff;border:1px solid #d0d0d0;box-sizing:border-box"></div>
<div class="r" style="left:31px;top:570px;width:978px;height:24px;background:#bdbdbd"></div>
<div class="t " style="left:45.2px;top:575.00px;font-size:13px;line-height:13px;color:#222;font-weight:bold;transform:scaleY(1.07);transform-origin:0 11.00px;">Configuration Item: Service (Production)</div>
<div class="t" style="right:1412px;top:608.20px;font-size:13px;line-height:13px;color:#222;font-weight:bold;text-align:right;transform:scaleY(1.07);transform-origin:0 11.00px;">Name:</div>
<div class="t " style="left:149px;top:608.20px;font-size:13px;line-height:13px;color:#222;font-weight:normal;transform:scaleY(1.07);transform-origin:0 11.00px;">Web Hosting Service</div>
<div class="t" style="right:1412px;top:630.00px;font-size:13px;line-height:13px;color:#222;font-weight:bold;text-align:right;transform:scaleY(1.07);transform-origin:0 11.00px;">Owner:</div>
<div class="t " style="left:149px;top:630.00px;font-size:13px;line-height:13px;color:#222;font-weight:normal;transform:scaleY(1.07);transform-origin:0 11.00px;">Sarah Long</div>
<div class="t" style="right:1412px;top:649.80px;font-size:13px;line-height:13px;color:#222;font-weight:bold;text-align:right;transform:scaleY(1.07);transform-origin:0 11.00px;">Administrator:</div>
<div class="t" style="right:1412px;top:667.60px;font-size:13px;line-height:13px;color:#222;font-weight:bold;text-align:right;transform:scaleY(1.07);transform-origin:0 11.00px;">Location:</div>
<div class="t " style="left:49.4px;top:689.50px;font-size:13px;line-height:13px;color:#222;font-weight:bold;transform:scaleY(1.07);transform-origin:0 11.00px;">Description:</div>
<div class="t " style="left:59px;top:709.80px;font-size:13px;line-height:13px;color:#222;font-weight:normal;transform:scaleY(1.07);transform-origin:0 11.00px;">Web Hosting Service</div>
<div class="t" style="right:944.5px;top:603.40px;font-size:13px;line-height:13px;color:#222;font-weight:bold;text-align:right;transform:scaleY(1.07);transform-origin:0 11.00px;">Created by:</div>
<div class="t " style="left:616px;top:603.40px;font-size:13px;line-height:13px;color:#222;font-weight:normal;transform:scaleY(1.07);transform-origin:0 11.00px;">Admin</div>
<div class="t" style="right:944.5px;top:625.00px;font-size:13px;line-height:13px;color:#222;font-weight:bold;text-align:right;transform:scaleY(1.07);transform-origin:0 11.00px;">On:</div>
<div class="t " style="left:616px;top:625.00px;font-size:13px;line-height:13px;color:#222;font-weight:normal;transform:scaleY(1.07);transform-origin:0 11.00px;">10/20/2009 9:13 AM</div>
<div class="t" style="right:944.5px;top:647.50px;font-size:13px;line-height:13px;color:#222;font-weight:bold;text-align:right;transform:scaleY(1.07);transform-origin:0 11.00px;">Modified by:</div>
<div class="t " style="left:616px;top:647.50px;font-size:13px;line-height:13px;color:#222;font-weight:normal;transform:scaleY(1.07);transform-origin:0 11.00px;">FRS_Josh</div>
<div class="t" style="right:944.5px;top:669.20px;font-size:13px;line-height:13px;color:#222;font-weight:bold;text-align:right;transform:scaleY(1.07);transform-origin:0 11.00px;">On:</div>
<div class="t " style="left:616px;top:669.20px;font-size:13px;line-height:13px;color:#222;font-weight:normal;transform:scaleY(1.07);transform-origin:0 11.00px;">1/29/2015 5:22 PM</div>
<div class="t " style="left:530.3px;top:689.50px;font-size:13px;line-height:13px;color:#222;font-weight:bold;transform:scaleY(1.07);transform-origin:0 11.00px;">Summary:</div>
<div class="r" style="left:1507px;top:560px;width:17px;height:221px;background:#efefef"></div>
<div class="r" style="left:20px;top:781px;width:1505px;height:1px;background:#a8a8a8"></div>
<div class="r" style="left:1508px;top:594px;width:15px;height:85px;background:#cccccc"></div>
<svg class="r" style="left:1508px;top:575px" width="15" height="13" viewBox="1508 575 15 13"><polygon points="1515.4,577.1 1521,582.3 1521,585.9 1515.4,580.6 1510,585.9 1510,582.3" fill="#555"/></svg>
<svg class="r" style="left:1508px;top:753px" width="15" height="13" viewBox="1508 753 15 13"><polygon points="1510,755.2 1515.5,760.5 1521,755.2 1521,759.5 1515.5,764.3 1510,759.5" fill="#555"/></svg>
<svg class="r" style="left:1543px;top:424px" width="8" height="38" viewBox="0 0 8 38"><path d="M8 0 L3 5 V33 L8 38 Z" fill="#f0f0f0" stroke="#d8d8d8" stroke-width="1"/><polygon points="2.8,19.5 6.2,17 6.2,22" fill="#999"/></svg>
<div class="r" style="left:0px;top:786px;width:1550px;height:1px;background:#e2e2e2"></div>
<div class="r" style="left:0px;top:787px;width:1550px;height:29px;background:#fff"></div>
<div class="t" style="right:10.5px;top:796.43px;font-size:11.3px;line-height:11.3px;color:#222;font-weight:normal;text-align:right;">Copyright &copy; 2005-2015 <b>HEAT Software USA Inc.</b> All rights reserved.</div>
<div class="r" style="left:0px;top:0px;width:1px;height:1px;background:#5a7585"></div>
</body></html>
